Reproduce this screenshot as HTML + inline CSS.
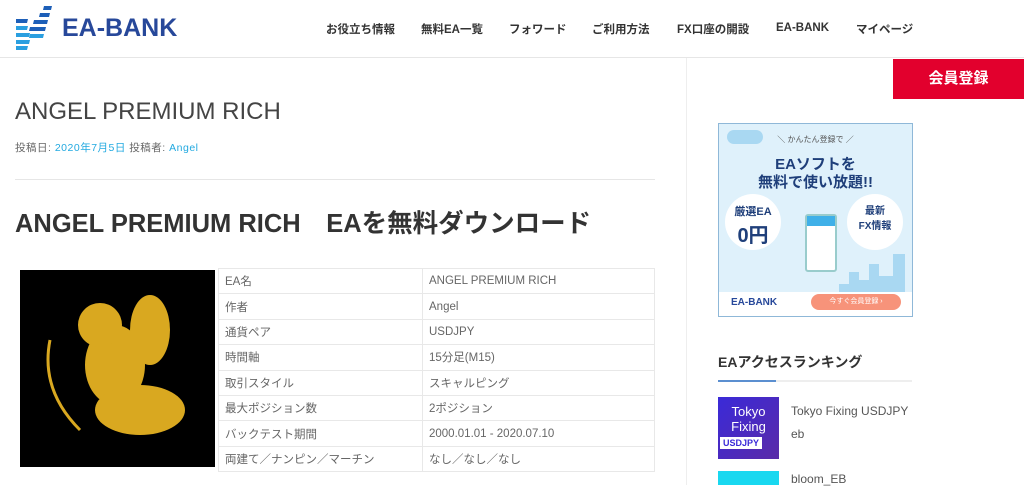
<!DOCTYPE html>
<html><head><meta charset="utf-8"><style>
*{margin:0;padding:0;box-sizing:border-box}
body{width:1024px;height:485px;overflow:hidden;background:#fff;font-family:"Liberation Sans","Noto Sans CJK JP",sans-serif;color:#333;position:relative}
.hdr{position:absolute;left:0;top:0;width:1024px;height:58px;border-bottom:1px solid #e6e6e6;background:#fff}
.nav{position:absolute;top:21px;font-size:11.5px;color:#333;font-weight:bold}
.vline{position:absolute;left:686px;top:58px;width:1px;height:427px;background:#eee}
.abs{position:absolute}
table{position:absolute;left:218px;top:268px;border-collapse:collapse;font-size:11.5px;color:#666}
td{border:1px solid #e8e8e8;height:25.4px;padding:0 6px}
</style></head><body>
<div class="hdr">
<svg class="abs" style="left:14px;top:5px" width="40" height="46" viewBox="0 0 40 46">
<g fill="#1d5fb8"><path d="M30 1h8l-1 4h-8z"/><path d="M26 8h10l-1 4h-10z"/><path d="M2 14h12l-1 4H2z"/><path d="M20 15h14l-1 4H19z"/><path d="M16 22h16l-1 4H15z"/></g>
<g fill="#2a9fe0"><path d="M2 21h12l-1 4H2z"/><path d="M2 28h14l-1 4H2z"/><path d="M16 29h14l-1 4H15z"/><path d="M2 35h14l-1 4H2z"/><path d="M2 41h12l-1 4H2z"/></g></svg>
<div class="abs" style="left:62px;top:14px;font-size:25px;font-weight:bold;color:#27489a">EA-BANK</div>
<div class="nav" style="left:326px">お役立ち情報</div>
<div class="nav" style="left:421px">無料EA一覧</div>
<div class="nav" style="left:509px">フォワード</div>
<div class="nav" style="left:592px">ご利用方法</div>
<div class="nav" style="left:677px">FX口座の開設</div>
<div class="nav" style="left:776px;top:22px">EA-BANK</div>
<div class="nav" style="left:856px">マイページ</div>
</div>
<div class="vline"></div>
<div class="abs" style="left:893px;top:59px;width:131px;height:40px;background:#e2002d;color:#fff;font-weight:bold;font-size:15px;text-align:center;line-height:40px">会員登録</div>
<div class="abs" style="left:15px;top:98px;font-size:24px;color:#444">ANGEL PREMIUM RICH</div>
<div class="abs" style="left:15px;top:140px;font-size:10.5px;color:#666;letter-spacing:0.5px">投稿日: <span style="color:#22a9e0">2020年7月5日</span> 投稿者: <span style="color:#22a9e0">Angel</span></div>
<div class="abs" style="left:15px;top:179px;width:640px;height:1px;background:#e6e6e6"></div>
<div class="abs" style="left:15px;top:203px;font-size:25.5px;color:#333;font-weight:bold;white-space:pre">ANGEL PREMIUM RICH　EAを無料ダウンロード</div>
<div class="abs" style="left:20px;top:270px;width:195px;height:197px;background:#000">
<svg width="195" height="197"><g fill="#d9a820"><ellipse cx="95" cy="95" rx="30" ry="40"/><ellipse cx="130" cy="60" rx="20" ry="35"/><ellipse cx="120" cy="140" rx="45" ry="25"/><circle cx="80" cy="55" r="22"/></g><path d="M30 70 Q20 120 60 160" stroke="#d9a820" stroke-width="3" fill="none"/></svg></div>
<table>
<tr><td style="width:204px">EA名</td><td style="width:232px">ANGEL PREMIUM RICH</td></tr>
<tr><td>作者</td><td>Angel</td></tr>
<tr><td>通貨ペア</td><td>USDJPY</td></tr>
<tr><td>時間軸</td><td>15分足(M15)</td></tr>
<tr><td>取引スタイル</td><td>スキャルピング</td></tr>
<tr><td>最大ポジション数</td><td>2ポジション</td></tr>
<tr><td>バックテスト期間</td><td>2000.01.01 - 2020.07.10</td></tr>
<tr><td>両建て／ナンピン／マーチン</td><td>なし／なし／なし</td></tr>
</table>
<div class="abs" style="left:718px;top:123px;width:195px;height:194px;background:#dff1fb;border:1px solid #8fb8d8;overflow:hidden">
<div class="abs" style="left:8px;top:6px;width:36px;height:14px;border-radius:8px;background:#a9d8f2"></div>
<svg class="abs" style="left:120px;top:130px" width="75" height="40"><path d="M0 40V30h10V18h10v8h10V10h10v12h14V0h12v40z" fill="#a9d8f2"/></svg>
<div class="abs" style="left:0;top:168px;width:195px;height:26px;background:#fff"></div>
<div class="abs" style="left:0;top:32px;width:193px;text-align:center;font-size:15px;font-weight:bold;color:#1f3f7a;line-height:18px">EAソフトを<br>無料で使い放題!!</div>
<div class="abs" style="left:0;top:10px;width:193px;text-align:center;font-size:8px;color:#555">＼ かんたん登録で ／</div>
<div class="abs" style="left:6px;top:70px;width:56px;height:56px;border-radius:50%;background:#fff;text-align:center;font-weight:bold;color:#1f3f7a;font-size:11px;padding-top:9px">厳選EA<br><span style="font-size:20px">0円</span></div>
<div class="abs" style="left:128px;top:70px;width:56px;height:56px;border-radius:50%;background:#fff;text-align:center;font-weight:bold;color:#1f3f7a;font-size:10px;padding-top:8px">最新<br>FX情報</div>
<div class="abs" style="left:86px;top:90px;width:32px;height:58px;background:#fff;border:2px solid #9cc;border-radius:3px"><div style="background:#3fb0e8;height:10px"></div></div>
<div class="abs" style="left:12px;top:173px;font-size:10px;font-weight:bold;color:#27489a">EA-BANK</div>
<div class="abs" style="left:92px;top:170px;width:90px;height:16px;border-radius:8px;background:#f7937a;color:#fff;font-size:7px;text-align:center;line-height:16px">今すぐ会員登録 ›</div>
</div>
<div class="abs" style="left:718px;top:352px;font-size:14px;font-weight:bold;color:#333">EAアクセスランキング</div>
<div class="abs" style="left:718px;top:380px;width:194px;height:2px;background:#eee"><div style="width:58px;height:2px;background:#5b8fd0"></div></div>
<div class="abs" style="left:718px;top:397px;width:61px;height:62px;background:linear-gradient(135deg,#3a2ad8,#5a2aa8);color:#fff;font-size:13px;text-align:center;line-height:15px;padding-top:7px">Tokyo<br>Fixing<div style="margin:3px 2px 0;background:#fff;color:#3a2ad8;font-size:9px;font-weight:bold;width:42px;line-height:12px">USDJPY</div></div>
<div class="abs" style="left:791px;top:400px;font-size:12px;color:#555;line-height:23px">Tokyo Fixing USDJPY<br>eb</div>
<div class="abs" style="left:718px;top:471px;width:61px;height:14px;background:#19d8f0"></div>
<div class="abs" style="left:791px;top:472px;font-size:12px;color:#555">bloom_EB</div>
</body></html>
